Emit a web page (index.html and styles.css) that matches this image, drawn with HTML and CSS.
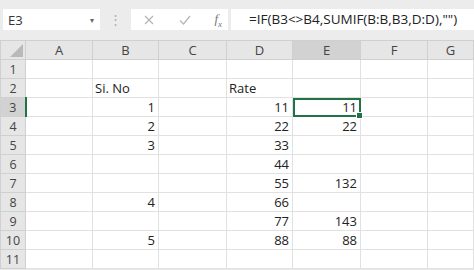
FILE: index.html
```html
<!DOCTYPE html>
<html lang="en">

<head>
    <meta charset="UTF-8">
    <title>Sheet</title>
    <link rel="stylesheet" href="styles.css">
</head>

<body>
    <div id="topBar">
        <div id="nameBox">
            <span>E3</span>
            <span class="arrow">&#9662;</span>
        </div>
        <div id="dots">&#8942;</div>
        <div id="iconBox">
            <svg width="12" height="12" viewBox="0 0 12 12"><path d="M2 2 L10 10 M10 2 L2 10" stroke="#b5b5b5" stroke-width="1.2" fill="none"/></svg>
            <svg width="14" height="12" viewBox="0 0 14 12"><path d="M2 6.5 L5.5 10 L12 2" stroke="#b5b5b5" stroke-width="1.2" fill="none"/></svg>
            <span class="fx"><i>f</i><sub>x</sub></span>
        </div>
        <div id="formulaBox">=IF(B3&lt;&gt;B4,SUMIF(B:B,B3,D:D),"")</div>
    </div>

    <table id="sheet">
        <colgroup>
            <col style="width:25px">
            <col style="width:67px">
            <col style="width:66px">
            <col style="width:68px">
            <col style="width:66px">
            <col style="width:68px">
            <col style="width:67px">
            <col>
        </colgroup>
        <tr class="colHead">
            <th class="corner"><div class="tri"></div></th>
            <th>A</th><th>B</th><th>C</th><th>D</th><th class="sel">E</th><th>F</th><th>G</th>
        </tr>
        <tr><th>1</th><td></td><td></td><td></td><td></td><td></td><td></td><td></td></tr>
        <tr><th>2</th><td></td><td class="txt">Si. No</td><td></td><td class="txt">Rate</td><td></td><td></td><td></td></tr>
        <tr><th class="sel">3</th><td></td><td>1</td><td></td><td>11</td><td class="active">11<div class="handle"></div></td><td></td><td></td></tr>
        <tr><th>4</th><td></td><td>2</td><td></td><td>22</td><td>22</td><td></td><td></td></tr>
        <tr><th>5</th><td></td><td>3</td><td></td><td>33</td><td></td><td></td><td></td></tr>
        <tr><th>6</th><td></td><td></td><td></td><td>44</td><td></td><td></td><td></td></tr>
        <tr><th>7</th><td></td><td></td><td></td><td>55</td><td>132</td><td></td><td></td></tr>
        <tr><th>8</th><td></td><td>4</td><td></td><td>66</td><td></td><td></td><td></td></tr>
        <tr><th>9</th><td></td><td></td><td></td><td>77</td><td>143</td><td></td><td></td></tr>
        <tr><th>10</th><td></td><td>5</td><td></td><td>88</td><td>88</td><td></td><td></td></tr>
        <tr><th>11</th><td></td><td></td><td></td><td></td><td></td><td></td><td></td></tr>
    </table>
</body>
</html>
```

FILE: styles.css
```css
body {
    margin: 0;
    width: 474px;
    height: 270px;
    overflow: hidden;
    background-color: #e9e9e9;
    font-family: "Open Sans", "Noto Sans", sans-serif;
}

#topBar {
    height: 40px;
    display: flex;
    align-items: flex-start;
    padding: 9px 0 0 3px;
    box-sizing: border-box;
    background-color: #ececec;
}

#nameBox {
    width: 97px;
    height: 21px;
    background-color: white;
    display: flex;
    align-items: center;
    justify-content: space-between;
    padding: 0 6px 0 5px;
    box-sizing: border-box;
    font-size: 13px;
    color: #333;
}

#nameBox .arrow {
    font-size: 8px;
    color: #666;
}

#dots {
    width: 31px;
    height: 21px;
    line-height: 21px;
    text-align: center;
    color: #b0b0b0;
    font-size: 13px;
}

#iconBox {
    width: 97px;
    height: 21px;
    background-color: white;
    display: flex;
    align-items: center;
    justify-content: space-between;
    padding: 0 6px 0 12px;
    box-sizing: border-box;
}

.fx {
    font-family: "Liberation Serif", serif;
    font-size: 13px;
    color: #777;
}

.fx sub {
    font-size: 9px;
    font-style: italic;
}

#formulaBox {
    flex: 1;
    height: 21px;
    margin-left: 3px;
    background-color: white;
    padding-left: 18px;
    font-size: 13.5px;
    line-height: 21px;
    color: #222;
    white-space: nowrap;
    overflow: hidden;
}

#sheet {
    border-collapse: collapse;
    table-layout: fixed;
    width: 474px;
    background-color: white;
    font-size: 13px;
    color: #222;
}

#sheet td {
    height: 18px;
    padding: 0 3px 0 2px;
    border: 1px solid #e1e1e1;
    text-align: right;
    line-height: 17px;
    white-space: nowrap;
    position: relative;
}

#sheet td.txt {
    text-align: left;
}

#sheet th {
    background-color: #e6e6e6;
    font-weight: normal;
    color: #444;
    font-size: 13px;
    border: 1px solid #d0d0d0;
    padding: 0;
    height: 18px;
    line-height: 17px;
}

#sheet tr th:first-child {
    text-align: center;
    font-size: 12.5px;
}

#sheet th.sel {
    background-color: #d2d2d2;
}

.colHead th.sel {
    border-bottom: 2px solid #217346;
}

#sheet tr th.sel:first-child {
    border-right: 2px solid #217346;
}

.corner {
    position: relative;
}

.tri {
    position: absolute;
    right: 2px;
    bottom: 2px;
    width: 0;
    height: 0;
    border-left: 13px solid transparent;
    border-bottom: 13px solid #b9b9b9;
}

#sheet td.active {
    outline: 2px solid #217346;
    outline-offset: -2px;
}

.handle {
    position: absolute;
    right: -3px;
    bottom: -3px;
    width: 5px;
    height: 5px;
    background-color: #217346;
    border: 1px solid white;
    z-index: 2;
}
```
